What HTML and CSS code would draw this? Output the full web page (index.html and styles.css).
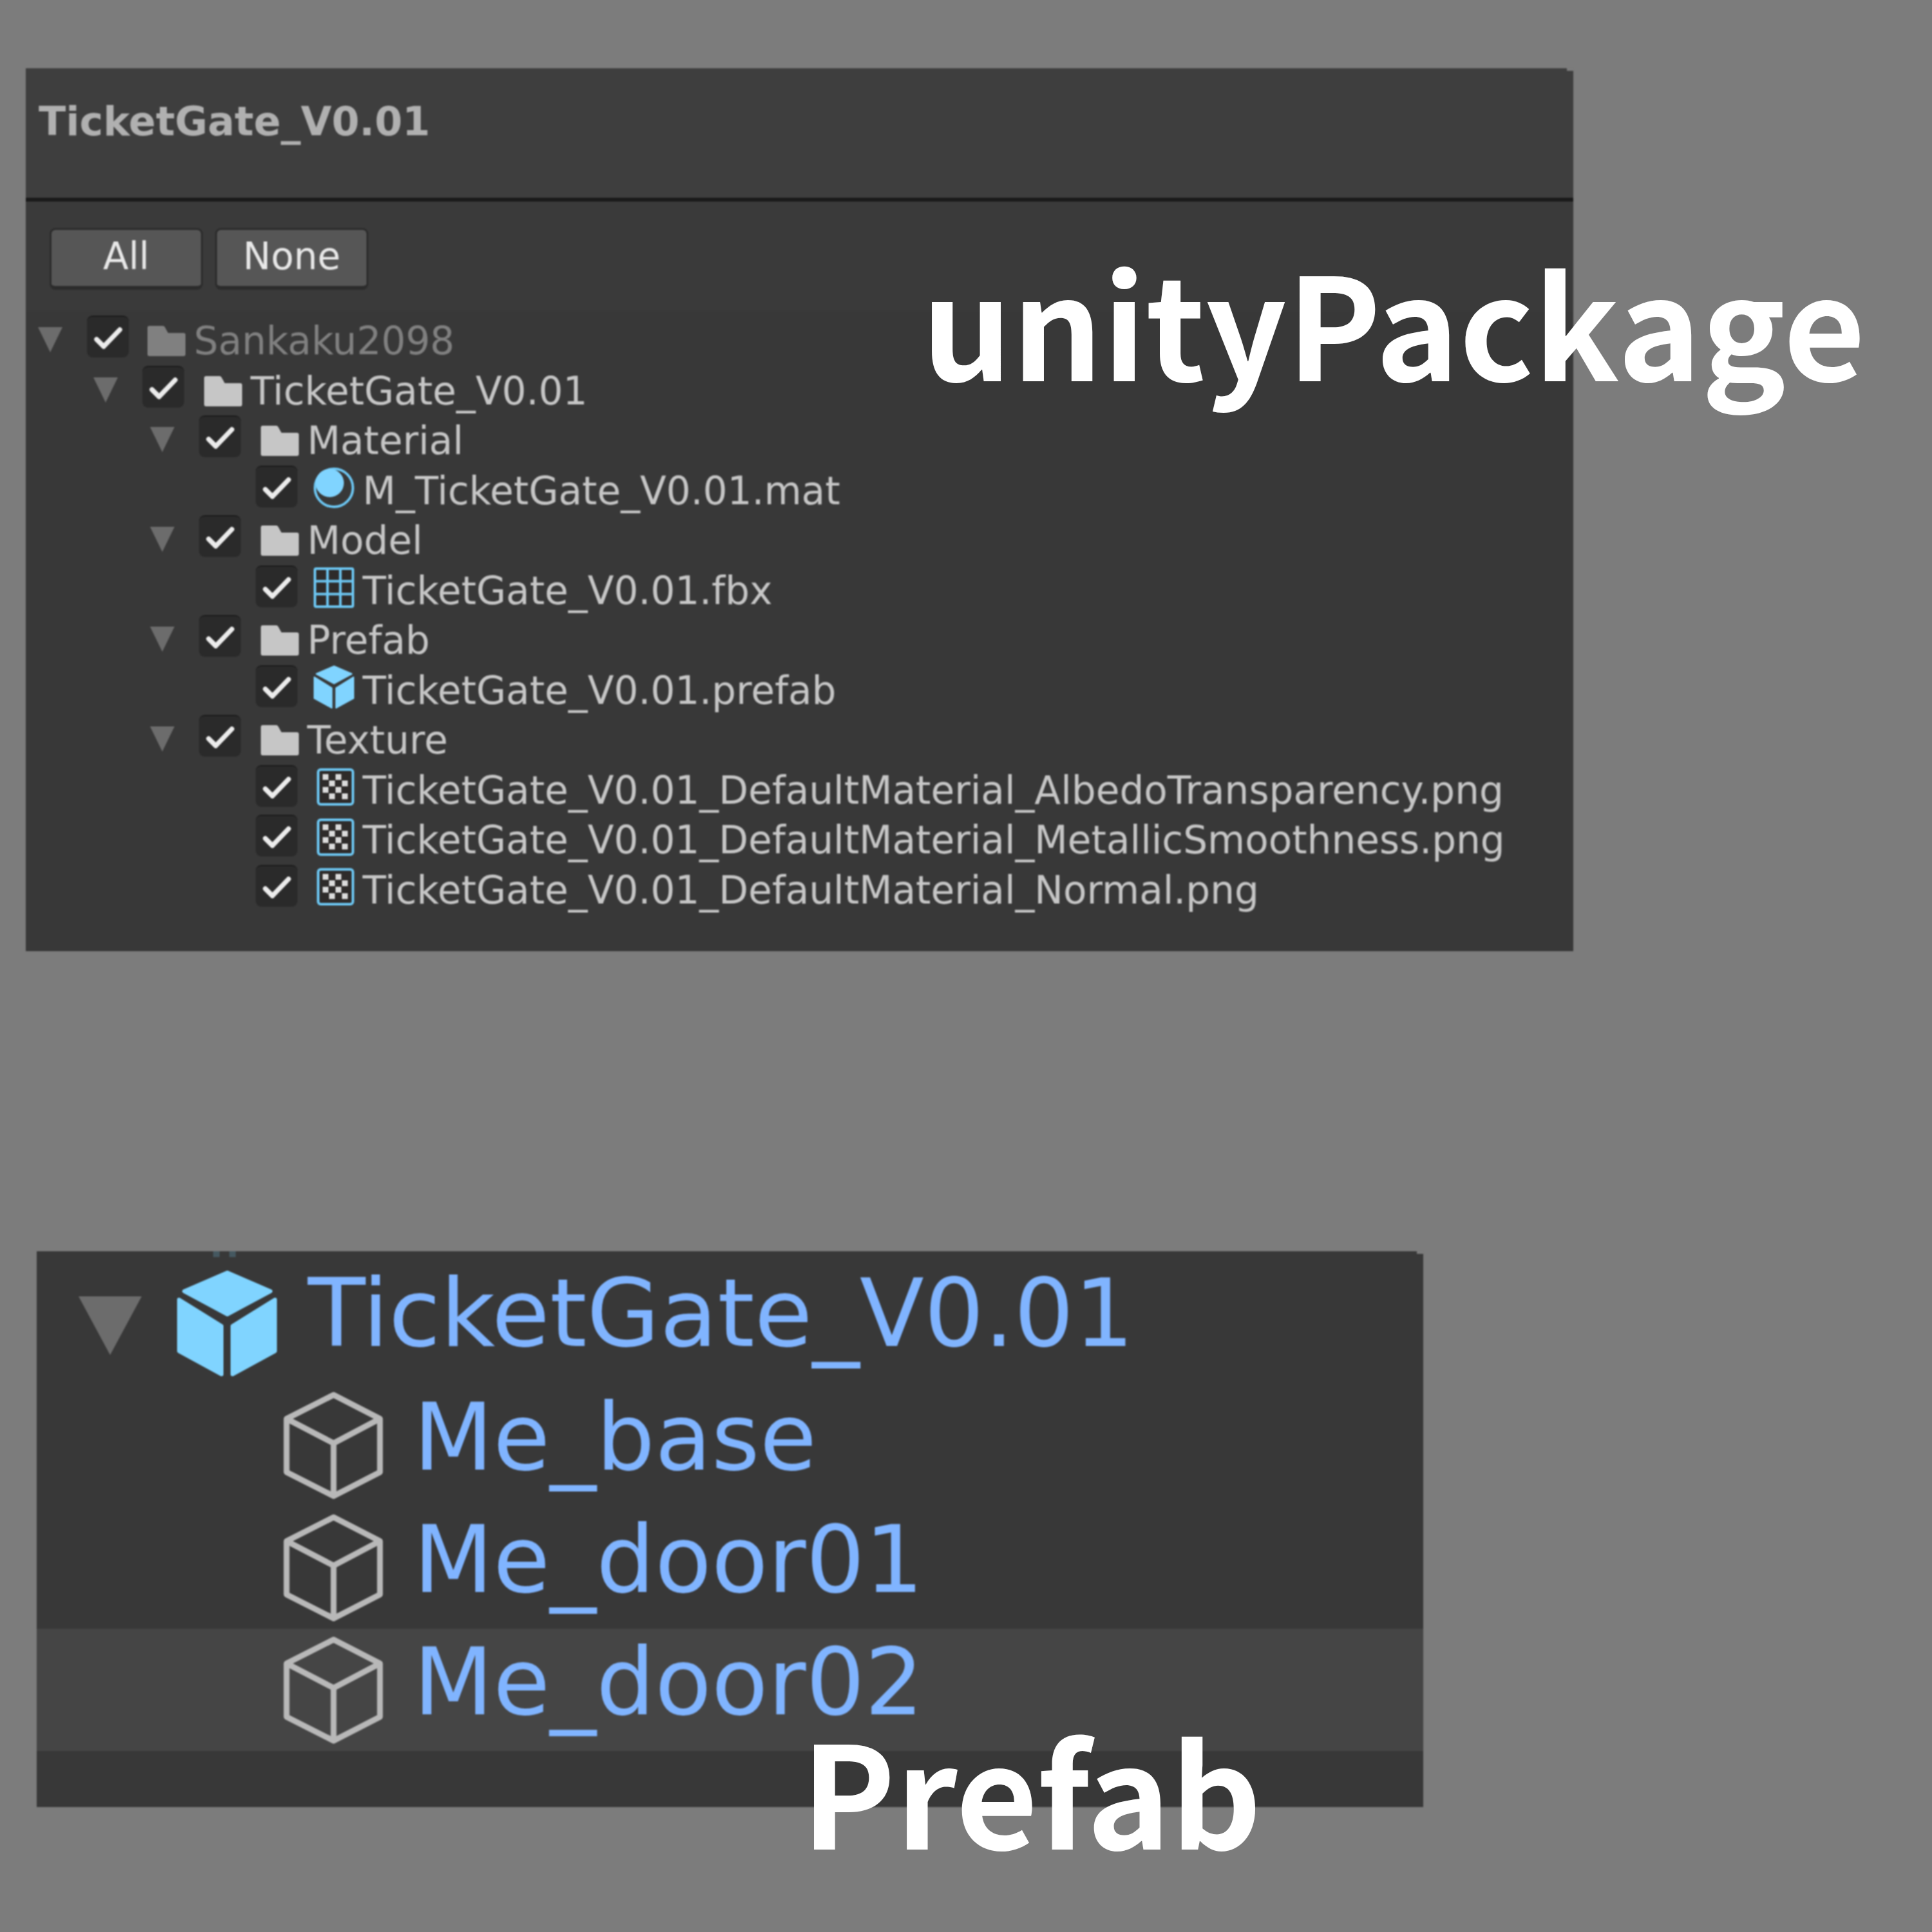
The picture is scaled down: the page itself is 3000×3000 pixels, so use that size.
FILE: index.html
```html
<!DOCTYPE html>
<html lang="ja">
<head>
    <meta charset="UTF-8">
    <title>unityPackage / Prefab</title>
    <link rel="stylesheet" href="styles.css">
</head>
<body>
    <svg class="defs" xmlns="http://www.w3.org/2000/svg">
        <symbol id="folder" viewBox="0 0 59 47">
            <path d="M3 0H24Q26 0 27 2L32 11H56Q59 11 59 14V44Q59 47 56 47H3Q0 47 0 44V3Q0 0 3 0Z" fill="currentColor"/>
        </symbol>
        <symbol id="cube" viewBox="0 0 155 167">
            <g fill="#80d4ff" stroke="#80d4ff" stroke-width="6" stroke-linejoin="round">
                <path d="M78 4L145 33L78 69L11 33Z"/>
                <path d="M3 46L69 87V162L3 126Z"/>
                <path d="M152 46L86 87V162L152 126Z"/>
            </g>
        </symbol>
        <symbol id="wirecube" viewBox="0 0 155 167">
            <g fill="none" stroke="#b8b8b8" stroke-width="9" stroke-linejoin="round">
                <path d="M78 5L150 42V125L78 162L5 125V42Z"/>
                <path d="M5 42L78 80L150 42M78 80V162"/>
            </g>
        </symbol>
        <symbol id="check" viewBox="0 0 65 65">
            <path d="M15 37L26 48L51 22" fill="none" stroke="#ececec" stroke-width="7.5" stroke-linecap="round" stroke-linejoin="round"/>
        </symbol>
        <symbol id="material" viewBox="0 0 63 63">
            <circle cx="31.5" cy="31.5" r="29.5" fill="none" stroke="#6cc6f2" stroke-width="4"/>
            <circle cx="25" cy="24" r="22" fill="#80d4ff"/>
        </symbol>
        <symbol id="mesh" viewBox="0 0 63 63">
            <rect x="2" y="2" width="59" height="59" rx="2" fill="#2e2b2a" stroke="#6cc6f2" stroke-width="4"/>
            <path d="M21.500 2V62M41.500 2V62M2 21.500H62M2 41.500H62" stroke="#6cc6f2" stroke-width="4" fill="none"/>
        </symbol>
        <symbol id="texture" viewBox="0 0 58 58">
            <rect x="2" y="2" width="54" height="54" rx="4" fill="#2e2b2a" stroke="#6cc6f2" stroke-width="4"/>
            <path d="M9 9h9v9H9zM29 9h9v9h-9zM19 19h9v9h-9zM39 19h9v9h-9zM9 29h9v9H9zM29 29h9v9h-9zM19 39h9v9h-9zM39 39h9v9h-9z" fill="#dcdcdc"/>
        </symbol>
    </svg>

    <section class="package">
        <header class="package-title">TicketGate_V0.01</header>
        <div class="toolbar">
            <button class="tool-btn">All</button>
            <button class="tool-btn">None</button>
        </div>
        <div class="tree">
            <div class="row d0 dim">
                <span class="arrow"></span>
                <span class="check"><svg><use href="#check"/></svg></span>
                <svg class="folder"><use href="#folder"/></svg>
                <span class="name">Sankaku2098</span>
            </div>
            <div class="row d1">
                <span class="arrow"></span>
                <span class="check"><svg><use href="#check"/></svg></span>
                <svg class="folder"><use href="#folder"/></svg>
                <span class="name">TicketGate_V0.01</span>
            </div>
            <div class="row d2">
                <span class="arrow"></span>
                <span class="check"><svg><use href="#check"/></svg></span>
                <svg class="folder"><use href="#folder"/></svg>
                <span class="name">Material</span>
            </div>
            <div class="row d3">
                <span class="arrow none"></span>
                <span class="check"><svg><use href="#check"/></svg></span>
                <svg class="file"><use href="#material"/></svg>
                <span class="name">M_TicketGate_V0.01.mat</span>
            </div>
            <div class="row d2">
                <span class="arrow"></span>
                <span class="check"><svg><use href="#check"/></svg></span>
                <svg class="folder"><use href="#folder"/></svg>
                <span class="name">Model</span>
            </div>
            <div class="row d3">
                <span class="arrow none"></span>
                <span class="check"><svg><use href="#check"/></svg></span>
                <svg class="file"><use href="#mesh"/></svg>
                <span class="name">TicketGate_V0.01.fbx</span>
            </div>
            <div class="row d2">
                <span class="arrow"></span>
                <span class="check"><svg><use href="#check"/></svg></span>
                <svg class="folder"><use href="#folder"/></svg>
                <span class="name">Prefab</span>
            </div>
            <div class="row d3">
                <span class="arrow none"></span>
                <span class="check"><svg><use href="#check"/></svg></span>
                <svg class="file tall"><use href="#cube"/></svg>
                <span class="name">TicketGate_V0.01.prefab</span>
            </div>
            <div class="row d2">
                <span class="arrow"></span>
                <span class="check"><svg><use href="#check"/></svg></span>
                <svg class="folder"><use href="#folder"/></svg>
                <span class="name">Texture</span>
            </div>
            <div class="row d3">
                <span class="arrow none"></span>
                <span class="check"><svg><use href="#check"/></svg></span>
                <svg class="file tex"><use href="#texture"/></svg>
                <span class="name">TicketGate_V0.01_DefaultMaterial_AlbedoTransparency.png</span>
            </div>
            <div class="row d3">
                <span class="arrow none"></span>
                <span class="check"><svg><use href="#check"/></svg></span>
                <svg class="file tex"><use href="#texture"/></svg>
                <span class="name">TicketGate_V0.01_DefaultMaterial_MetallicSmoothness.png</span>
            </div>
            <div class="row d3">
                <span class="arrow none"></span>
                <span class="check"><svg><use href="#check"/></svg></span>
                <svg class="file tex"><use href="#texture"/></svg>
                <span class="name">TicketGate_V0.01_DefaultMaterial_Normal.png</span>
            </div>
        </div>
    </section>

    <section class="hierarchy">
        <div class="node root">
            <span class="node-arrow"></span>
            <svg class="node-icon"><use href="#cube"/></svg>
            <span class="node-name">TicketGate_V0.01</span>
        </div>
        <div class="node child">
            <svg class="node-icon"><use href="#wirecube"/></svg>
            <span class="node-name">Me_base</span>
        </div>
        <div class="node child">
            <svg class="node-icon"><use href="#wirecube"/></svg>
            <span class="node-name">Me_door01</span>
        </div>
        <div class="node child hover">
            <svg class="node-icon"><use href="#wirecube"/></svg>
            <span class="node-name">Me_door02</span>
        </div>
    </section>

    <div class="label label-package">unityPackage</div>
    <div class="label label-prefab">Prefab</div>
</body>
</html>
```

FILE: styles.css
```css
body {
    margin: 0;
    width: 3000px;
    height: 3000px;
    overflow: hidden;
    position: relative;
    background: #7c7c7c;
    font-family: "DejaVu Sans", sans-serif;
}

.defs {
    display: none;
}

/* unityPackage panel */
.package {
    position: relative;
    width: 2403px;
    height: 1371px;
    margin: 106px 0 0 40px;
    display: flex;
    flex-direction: column;
    background: #3a3a3a;
    filter: blur(0.8px);
}

/* small nick in the corner of the screenshot */
.package::before,
.hierarchy::before {
    content: "";
    position: absolute;
    top: 0;
    right: 0;
    width: 10px;
    height: 4px;
    background: #7c7c7c;
}

.package-title {
    height: 207px;
    box-sizing: border-box;
    padding: 0 0 36px 20px;
    display: flex;
    align-items: center;
    border-bottom: 6px solid #1a1a1a;
    background: #3e3e3e;
    color: #b0b0b0;
    font-size: 62px;
    font-weight: bold;
}

.toolbar {
    height: 170px;
    box-sizing: border-box;
    padding: 41px 0 0 37px;
    display: flex;
    gap: 19px;
}

.tool-btn {
    width: 238px;
    height: 96px;
    border: 3px solid #2c2c2c;
    border-bottom-width: 6px;
    border-radius: 9px;
    background: #565656;
    color: #e8e8e8;
    font-family: inherit;
    font-size: 58px;
    padding: 0 0 6px;
}

.tree {
    flex: 1;
    padding-top: 8px;
    background: #383838;
}

.row {
    height: 77.5px;
    display: flex;
    align-items: center;
    color: #c6c6c6;
    font-size: 59.700px;
    white-space: nowrap;
}

.d0 { padding-left: 19px; }
.d1 { padding-left: 105px; }
.d2 { padding-left: 193px; }
.d3 { padding-left: 281px; }

.dim {
    color: #808080;
}

.arrow {
    width: 0;
    height: 0;
    margin: 0 38px 4px 0;
    border-left: 19.500px solid transparent;
    border-right: 19.500px solid transparent;
    border-top: 39px solid #6c6c6c;
}

.arrow.none {
    border-top-color: transparent;
}

.check {
    width: 65px;
    height: 65px;
    margin: 0 25px 14px 0;
    flex-shrink: 0;
    box-sizing: border-box;
    border-radius: 9px;
    border-top: 2px solid #1c1c1c;
    background: #2a2a2a;
}

.check svg {
    display: block;
    width: 65px;
    height: 65px;
    margin-top: -2px;
}

.folder {
    width: 59px;
    height: 47px;
    margin: 0 13px 0 4px;
    flex-shrink: 0;
}

.d1 .folder,
.d2 .folder {
    margin-left: 6px;
}

.file {
    width: 63px;
    height: 63px;
    margin: 0 13px 10px 0;
    flex-shrink: 0;
}

.file.tall {
    height: 68px;
}

.file.tex {
    width: 58px;
    height: 58px;
    margin-left: 5px;
}

/* Prefab hierarchy */
.hierarchy {
    position: relative;
    width: 2153px;
    height: 863px;
    margin: 466px 0 0 57px;
    background: #383838;
    filter: blur(0.8px);
}

.hierarchy::after {
    content: "";
    position: absolute;
    top: 0;
    left: 274px;
    width: 10px;
    height: 9px;
    background: #455860;
    box-shadow: 25px 0 #455860;
}

.node {
    height: 190px;
    box-sizing: border-box;
    display: flex;
    align-items: center;
    color: #80b4ff;
    font-size: 143.500px;
    white-space: nowrap;
}

.node-name {
    margin-bottom: 22px;
    line-height: 1;
}

.node.root {
    height: 206px;
    padding-left: 65px;
    font-size: 146.400px;
}

.node.root .node-name {
    margin-bottom: 11px;
}

.node.child {
    padding-left: 383px;
}

.node.hover {
    background: #454545;
}

.node-arrow {
    width: 0;
    height: 0;
    margin: 25px 55px 0 0;
    border-left: 49px solid transparent;
    border-right: 49px solid transparent;
    border-top: 91px solid #6c6c6c;
}

.node-icon {
    width: 155px;
    height: 167px;
    margin-right: 48px;
    flex-shrink: 0;
}

.node.root .node-icon {
    margin-top: 19px;
}

.node.child .node-icon {
    margin-right: 47px;
}

/* labels lie over the panels */
.label {
    position: absolute;
    color: #fff;
    font-family: "Noto Sans CJK JP", sans-serif;
    font-size: 220px;
    font-weight: 700;
    line-height: 0.8;
    white-space: nowrap;
}

.label-package {
    left: 1431px;
    top: 408px;
}

.label-prefab {
    left: 1244px;
    top: 2688px;
}
```
